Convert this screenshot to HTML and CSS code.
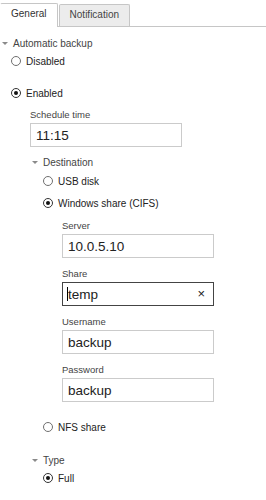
FILE: index.html
```html
<!DOCTYPE html>
<html lang="en">
<head>
    <meta charset="UTF-8">
    <meta name="viewport" content="width=device-width, initial-scale=1.0">
    <title>Backup settings</title>
    <link rel="stylesheet" href="styles.css">
</head>
<body>
    <div class="tabs">
        <div class="tab active">General</div>
        <div class="tab">Notification</div>
    </div>

    <div class="panel">
        <!-- 自动备份 -->
        <div class="group">
            <div class="group-title"><span class="caret"></span>Automatic backup</div>
            <div class="options">
                <div class="radio disabled-opt"><span class="dot"></span>Disabled</div>
                <div class="radio checked enabled-opt"><span class="dot"></span>Enabled</div>

                <div class="sub">
                    <div class="field first">
                        <div class="label">Schedule time</div>
                        <input class="input" type="text" value="11:15">
                    </div>

                    <div class="group dest">
                        <div class="group-title"><span class="caret"></span>Destination</div>
                        <div class="options nested">
                            <div class="radio usb"><span class="dot"></span>USB disk</div>
                            <div class="radio checked cifs"><span class="dot"></span>Windows share (CIFS)</div>

                            <div class="sub">
                                <div class="field first">
                                    <div class="label">Server</div>
                                    <input class="input" type="text" value="10.0.5.10">
                                </div>
                                <div class="field">
                                    <div class="label">Share</div>
                                    <div class="input-wrap">
                                        <input class="input focused" type="text" value="temp">
                                        <span class="text-caret"></span>
                                        <span class="clear">×</span>
                                    </div>
                                </div>
                                <div class="field">
                                    <div class="label">Username</div>
                                    <input class="input" type="text" value="backup">
                                </div>
                                <div class="field">
                                    <div class="label">Password</div>
                                    <input class="input" type="text" value="backup">
                                </div>
                            </div>

                            <div class="radio nfs"><span class="dot"></span>NFS share</div>
                        </div>
                    </div>

                    <div class="group type">
                        <div class="group-title"><span class="caret"></span>Type</div>
                        <div class="options nested">
                            <div class="radio checked full"><span class="dot"></span>Full</div>
                        </div>
                    </div>
                </div>
            </div>
        </div>
    </div>
</body>
</html>
```

FILE: styles.css
```css
* {
    box-sizing: border-box;
}

body {
    margin: 0;
    font-family: "Liberation Sans", Arial, sans-serif;
    font-size: 10px;
    color: #333;
    background: #fff;
}

/* 标签页 */
.tabs {
    display: flex;
    align-items: flex-end;
    gap: 1px;
    height: 27px;
    padding-top: 3px;
    border-bottom: 1px solid #c6c6c6;
}

.tab {
    padding: 0 10px 2px;
    line-height: 19px;
    border: 1px solid #c6c6c6;
    border-bottom: none;
    border-radius: 2px 2px 0 0;
    background: #ececec;
    color: #444;
}

.tab.active {
    margin-bottom: -1px;
    padding-bottom: 3px;
    line-height: 20px;
    background: #fff;
    border-left-color: #fff;
    color: #333;
}

/* 分组 */
.group-title {
    display: flex;
    align-items: center;
    height: 16px;
    color: #444;
}

.caret {
    width: 0;
    height: 0;
    margin: 0 5px 0 2px;
    border-left: 3px solid transparent;
    border-right: 3px solid transparent;
    border-top: 3px solid #8a8a8a;
}

.panel > .group > .group-title {
    margin-top: 8px;
}

.options {
    padding-left: 11px;
}

.options.nested {
    padding-left: 13px;
}

.group.dest,
.group.type {
    margin-left: 0;
}

.dest { margin-top: 7px; }
.type { margin-top: 17px; }

/* 单选 */
.radio {
    display: flex;
    align-items: center;
    height: 16px;
    font-size: 10px;
    color: #222;
}

.dot {
    position: relative;
    width: 10px;
    height: 10px;
    margin-right: 5px;
    border: 1px solid #6f6f6f;
    border-radius: 50%;
    background: #fff;
}

.radio.checked .dot {
    border-color: #333;
}

.radio.checked .dot::after {
    content: "";
    position: absolute;
    left: 2px;
    top: 2px;
    width: 4px;
    height: 4px;
    border-radius: 50%;
    background: #111;
}

.disabled-opt { margin-top: 2px; }
.enabled-opt { margin-top: 16px; }
.usb { margin-top: 3px; }
.cifs { margin-top: 6px; }
.nfs { margin-top: 17px; }
.full { margin-top: 2px; }

/* 输入区 */
.sub {
    padding-left: 19px;
}

.field {
    margin-top: 9px;
}

.field.first {
    margin-top: 7px;
}

.cifs + .sub .field.first {
    margin-top: 8px;
}

.label {
    height: 14px;
    line-height: 14px;
    margin-bottom: 1px;
    font-size: 9.5px;
    color: #444;
}

.input {
    display: block;
    width: 152px;
    height: 24px;
    padding: 0 5px;
    margin: 0;
    border: 1px solid #cbcbcb;
    border-radius: 0;
    outline: none;
    font-family: "Liberation Sans", Arial, sans-serif;
    font-size: 13.5px;
    color: #222;
    background: #fff;
}

.input.focused {
    border-color: #444;
}

.input-wrap {
    position: relative;
    width: 152px;
}

.text-caret {
    position: absolute;
    left: 5px;
    top: 5px;
    width: 1px;
    height: 14px;
    background: #000;
}

.clear {
    position: absolute;
    right: 9px;
    top: 4px;
    font-size: 13px;
    line-height: 16px;
    color: #222;
}
```
